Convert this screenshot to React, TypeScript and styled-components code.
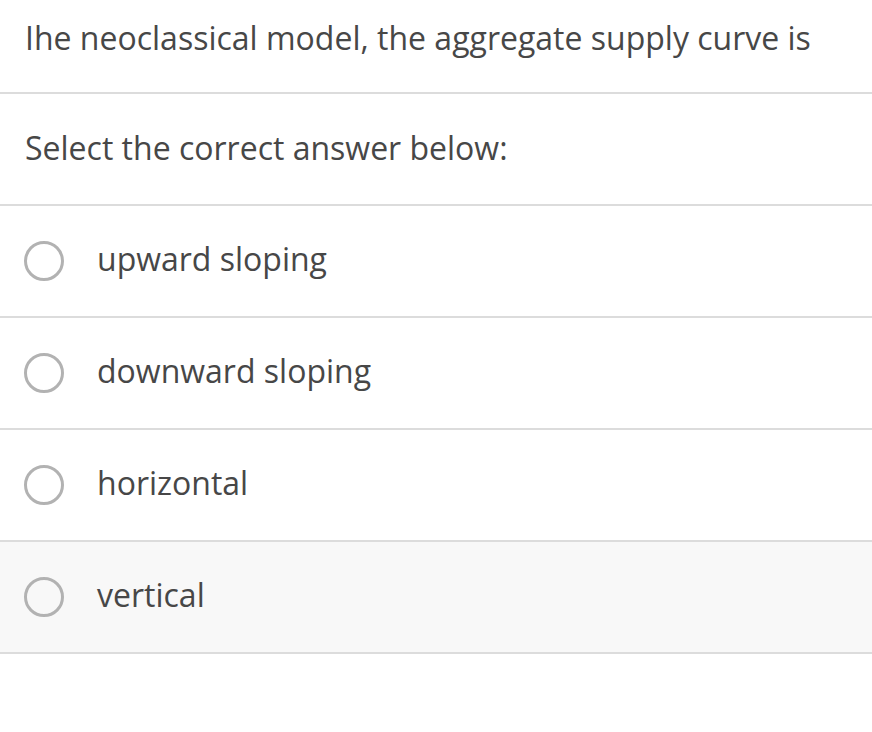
import React from "react";
import styled, { createGlobalStyle } from "styled-components";

const GlobalStyle = createGlobalStyle`
  html, body {
    margin: 0;
    padding: 0;
    background: #ffffff;
  }
  body {
    font-family: "Open Sans", "Noto Sans", sans-serif;
    color: #474747;
  }
`;

const Page = styled.div`
  width: 872px;
  display: flex;
  flex-direction: column;
`;

const Question = styled.div`
  height: 94px;
  box-sizing: border-box;
  padding: 16px 25px 0;
  font-size: 32px;
  line-height: 44px;
  border-bottom: 2px solid #dcdcdc;
`;

const Prompt = styled.div`
  height: 112px;
  box-sizing: border-box;
  display: flex;
  align-items: center;
  padding: 0 25px 4px;
  font-size: 32px;
  border-bottom: 2px solid #dcdcdc;
`;

const Option = styled.label<{ $highlighted?: boolean }>`
  height: 112px;
  box-sizing: border-box;
  display: flex;
  align-items: center;
  gap: 33px;
  padding: 0 24px;
  font-size: 32px;
  cursor: pointer;
  background: ${(p) => (p.$highlighted ? "#f8f8f8" : "#ffffff")};
  border-bottom: 2px solid #dcdcdc;
`;

const OptionText = styled.span`
  position: relative;
  top: -3px;
`;

const Radio = styled.span`
  width: 40px;
  height: 40px;
  box-sizing: border-box;
  border: 3px solid #b2b2b2;
  border-radius: 50%;
  flex-shrink: 0;
`;

const options = ["upward sloping", "downward sloping", "horizontal", "vertical"];

export default function App() {
  return (
    <Page>
      <GlobalStyle />
      <Question>Ihe neoclassical model, the aggregate supply curve is</Question>
      <Prompt>Select the correct answer below:</Prompt>
      {options.map((o, i) => (
        <Option key={o} $highlighted={i === 3}>
          <Radio />
          <OptionText>{o}</OptionText>
        </Option>
      ))}
    </Page>
  );
}
